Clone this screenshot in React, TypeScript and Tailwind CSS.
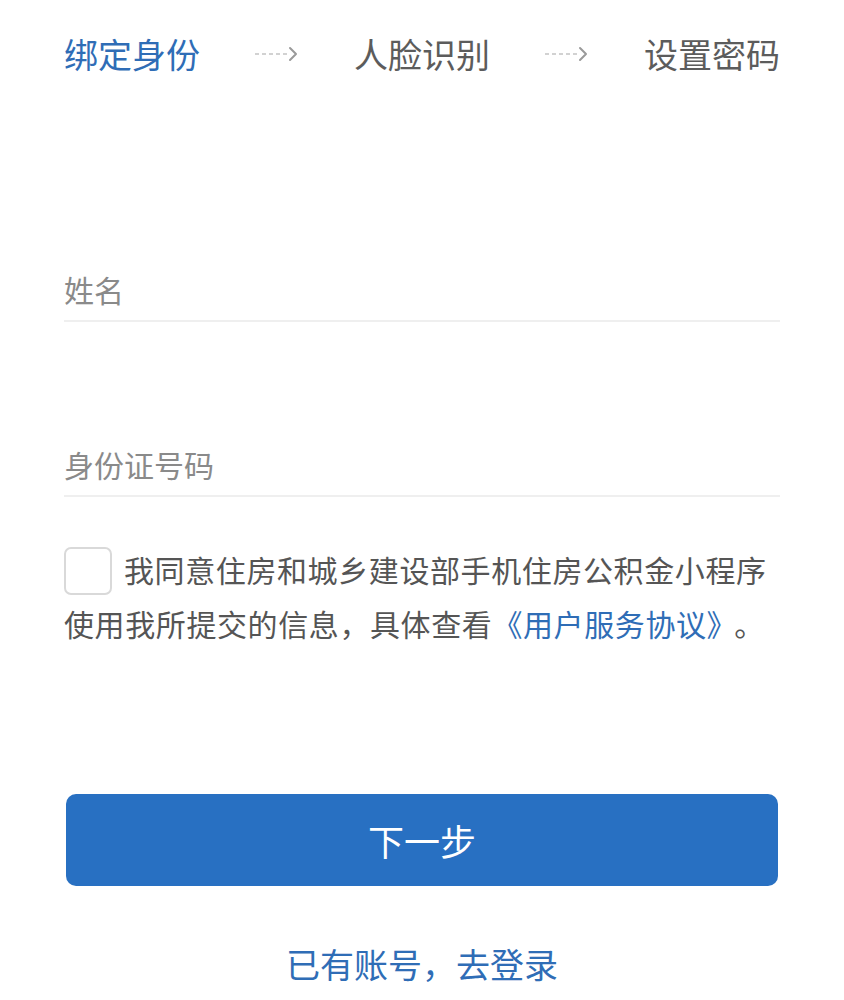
import { useState } from 'react';

const font = { fontFamily: '"Noto Sans CJK SC", "Noto Sans", sans-serif' };

function StepArrow() {
  return (
    <svg width="46" height="20" viewBox="0 0 46 20" className="shrink-0">
      <path d="M1 10 H34" stroke="#c4c4c4" strokeWidth="1.6" strokeDasharray="4 3" fill="none" />
      <path d="M36 4 L42 10 L36 16" stroke="#9a9a9a" strokeWidth="2" fill="none" strokeLinecap="round" strokeLinejoin="round" />
    </svg>
  );
}

export default function App() {
  const [name, setName] = useState('');
  const [idNo, setIdNo] = useState('');
  const [agreed, setAgreed] = useState(false);

  return (
    <div className="w-[844px] min-h-[1000px] bg-white px-16" style={font}>
      {/* steps */}
      <div className="flex items-center justify-between pt-[34px] text-[34px] leading-[40px]">
        <span className="text-[#2f6db6]">绑定身份</span>
        <StepArrow />
        <span className="text-[#5c5c5c]">人脸识别</span>
        <StepArrow />
        <span className="text-[#5c5c5c]">设置密码</span>
      </div>

      {/* fields */}
      <div className="mt-[195px] border-b-2 border-[#efefef] pb-[11px]">
        <input
          value={name}
          onChange={e => setName(e.target.value)}
          placeholder="姓名"
          className="w-full bg-transparent text-[30px] leading-[40px] h-[40px] text-[#333] placeholder:text-[#8a8a8a] outline-none"
        />
      </div>
      <div className="mt-[122px] border-b-2 border-[#efefef] pb-[11px]">
        <input
          value={idNo}
          onChange={e => setIdNo(e.target.value)}
          placeholder="身份证号码"
          className="w-full bg-transparent text-[30px] leading-[40px] h-[40px] text-[#333] placeholder:text-[#8a8a8a] outline-none"
        />
      </div>

      {/* agreement */}
      <p className="mt-[45px] text-[30px] leading-[54px] tracking-[0.6px] text-[#555]">
        <button
          type="button"
          onClick={() => setAgreed(!agreed)}
          className={`inline-block align-middle mr-3 -mt-[6px] w-12 h-12 rounded-[7px] border-2 ${agreed ? 'border-[#2870c2] bg-[#2870c2]' : 'border-[#d9d9d9] bg-white'}`}
        />
        我同意住房和城乡建设部手机住房公积金小程序使用我所提交的信息，具体查看
        <span className="text-[#2f6db6]">《用户服务协议》</span>
        <span className="ml-3">。</span>
      </p>

      {/* actions */}
      <button
        type="button"
        className="mt-[144px] mx-[2px] w-[712px] h-[92px] rounded-[10px] bg-[#2870c2] text-white text-[36px] flex items-center justify-center"
      >
        下一步
      </button>
      <div className="mt-[58px] text-center text-[34px] leading-[40px] text-[#2f6db6]">
        已有账号，去登录
      </div>
    </div>
  );
}
